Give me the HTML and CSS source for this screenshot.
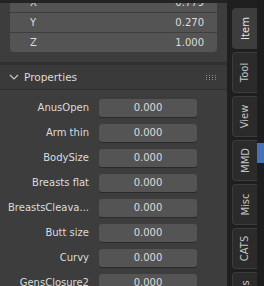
FILE: index.html
```html
<!DOCTYPE html>
<html lang="en">
<head>
    <meta charset="UTF-8">
    <meta name="viewport" content="width=device-width, initial-scale=1.0">
    <title>Sidebar - Item</title>
    <link rel="stylesheet" href="styles.css">
</head>
<body>

    <div class="sidebar">
        <div class="region">
            <div class="top-shade"></div>
            <div class="scroll">
                <div class="transform-panel">
                    <div class="xyz-box">
                        <div class="xyz-row"><span>X</span><span>0.779</span></div>
                        <div class="xyz-row"><span>Y</span><span>0.270</span></div>
                        <div class="xyz-row"><span>Z</span><span>1.000</span></div>
                    </div>
                </div>

                <div class="panel">
                    <div class="panel-header">
                        <svg class="chevron" width="10" height="6" viewBox="0 0 10 6">
                            <path d="M1 1 L5 5 L9 1" fill="none" stroke="#c8c8c8" stroke-width="1.2"/>
                        </svg>
                        <span class="panel-title">Properties</span>
                        <div class="grip">
                            <i></i><i></i><i></i><i></i>
                            <i></i><i></i><i></i><i></i>
                            <i></i><i></i><i></i><i></i>
                        </div>
                    </div>
                    <div class="panel-body">
                        <div class="prop"><label>AnusOpen</label><div class="field">0.000</div></div>
                        <div class="prop"><label>Arm thin</label><div class="field">0.000</div></div>
                        <div class="prop"><label>BodySize</label><div class="field">0.000</div></div>
                        <div class="prop"><label>Breasts flat</label><div class="field">0.000</div></div>
                        <div class="prop"><label>BreastsCleava...</label><div class="field">0.000</div></div>
                        <div class="prop"><label>Butt size</label><div class="field">0.000</div></div>
                        <div class="prop"><label>Curvy</label><div class="field">0.000</div></div>
                        <div class="prop"><label>GensClosure2</label><div class="field">0.000</div></div>
                    </div>
                </div>
            </div>
        </div>

        <div class="tabs">
            <div class="tab active"><span>Item</span></div>
            <div class="tab"><span>Tool</span></div>
            <div class="tab"><span>View</span></div>
            <div class="tab"><span>MMD</span></div>
            <div class="tab"><span>Misc</span></div>
            <div class="tab"><span>CATS</span></div>
            <div class="tab"><span>Tools</span></div>
        </div>

        <div class="edge">
            <div class="edge-blue"></div>
        </div>
    </div>

</body>
</html>
```

FILE: styles.css
```css
body {
    margin: 0;
    background-color: #1d1d1d;
    font-family: "DejaVu Sans", sans-serif;
    font-size: 10px;
    color: #dcdcdc;
    overflow: hidden;
}

.sidebar {
    display: flex;
    width: 264px;
    height: 286px;
    overflow: hidden;
}

/* Main region with panels */
.region {
    position: relative;
    width: 227px;
    background-color: #303030;
    overflow: hidden;
}

.top-shade {
    position: absolute;
    top: 0;
    left: 0;
    right: 0;
    height: 3px;
    background-color: #232323;
}

.scroll {
    margin-top: -7px;
}

.transform-panel {
    background-color: #3d3d3d;
    padding: 0 10px 10px 10px;
}

.xyz-box {
    background-color: #545454;
    border-radius: 0 0 4px 4px;
    overflow: hidden;
    width: 207px;
}

.xyz-row {
    display: flex;
    justify-content: space-between;
    height: 19px;
    line-height: 19px;
    padding: 0 13px 0 20px;
    border-bottom: 1px solid #3e3e3e;
}

.xyz-row:last-child {
    border-bottom: none;
}

.panel {
    margin-top: 3px;
    background-color: #3d3d3d;
}

.panel-header {
    display: flex;
    align-items: center;
    height: 24px;
    padding: 0 7px 0 9px;
    background-color: #3a3a3a;
    border-bottom: 1px solid #2f2f2f;
}

.chevron {
    margin-right: 5px;
}

.panel-title {
    flex: 1;
    font-size: 10.5px;
}

.grip {
    display: grid;
    grid-template-columns: repeat(4, 1px);
    gap: 1px 2px;
    margin-right: 4px;
}

.grip i {
    width: 1px;
    height: 1px;
    background-color: #8a8a8a;
}

.panel-body {
    padding-top: 5px;
}

.prop {
    display: flex;
    align-items: center;
    height: 25px;
}

.prop label {
    width: 89px;
    text-align: right;
    padding-right: 10px;
    white-space: nowrap;
}

.field {
    width: 98px;
    height: 18px;
    line-height: 18px;
    text-align: center;
    background-color: #545454;
    border-radius: 3px;
    box-shadow: 0 1px 0 #2a2a2a;
}

/* Vertical tabs */
.tabs {
    display: flex;
    flex-direction: column;
    gap: 3px;
    width: 25px;
    padding-top: 8px;
    padding-left: 5px;
    background-color: #1f1f1f;
}

.tab {
    display: flex;
    align-items: center;
    justify-content: center;
    box-sizing: border-box;
    height: 41px;
    flex-shrink: 0;
    color: #c4c4c4;
    background-color: #2b2b2b;
    border-radius: 4px 0 0 4px;
    border: 1px solid #3c3c3c;
    border-right: none;
}

.tab.active {
    color: #e6e6e6;
    background-color: #3d3d3d;
}

.tab span {
    transform: rotate(-90deg);
    white-space: nowrap;
}

.edge {
    flex: 1;
    position: relative;
    background-color: #1d1d1d;
}

.edge-blue {
    position: absolute;
    top: 143px;
    right: 0;
    width: 7px;
    height: 20px;
    background-color: #4772b3;
}
```
